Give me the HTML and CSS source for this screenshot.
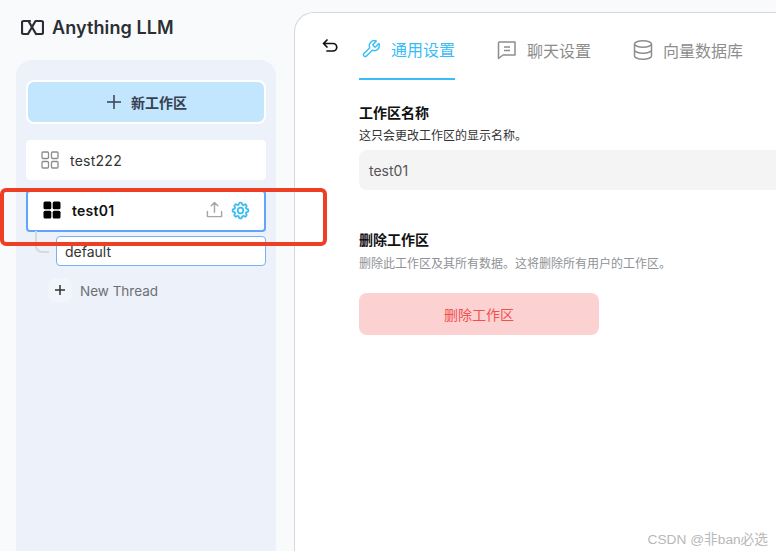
FILE: index.html
```html
<!DOCTYPE html>
<html lang="zh-CN">
<head>
<meta charset="utf-8">
<title>AnythingLLM</title>
<link rel="stylesheet" href="styles.css">
</head>
<body>
<div class="page">
  <aside class="side">
    <div class="brand">
      <svg class="brand-mark" viewBox="0 0 23 17" fill="none" stroke="#2b2f33" stroke-width="2.200" stroke-linejoin="round" stroke-linecap="round"><path d="M9 2H2.500A1.500 1.500 0 0 0 1 3.500V13.500A1.500 1.500 0 0 0 2.500 15H7L14.500 2H20.500A1.500 1.500 0 0 1 22 3.500V13.500A1.500 1.500 0 0 1 20.500 15H16"/><path d="M8 3L15 15"/></svg>
      <span class="brand-name">Anything LLM</span>
    </div>
    <nav class="panel">
      <button class="new-btn">
        <svg class="new-plus" viewBox="0 0 14 14" fill="none" stroke="#374151" stroke-width="1.500"><path d="M7 0V14M0 7H14"/></svg>
        <span>新工作区</span>
      </button>
      <div class="ws">
        <svg class="ws-icon" viewBox="0 0 18 18" fill="none" stroke="#8a8d91" stroke-width="1.300"><rect x="1" y="1" width="6.500" height="6.500" rx="1"/><rect x="10.500" y="1" width="6.500" height="6.500" rx="1"/><rect x="1" y="10.500" width="6.500" height="6.500" rx="1"/><rect x="10.500" y="10.500" width="6.500" height="6.500" rx="1"/></svg>
        <span>test222</span>
      </div>
      <div class="ws ws-active">
        <svg class="ws-icon" viewBox="0 0 18 18" fill="#000"><rect x="0.500" y="0.500" width="7.800" height="7.800" rx="1.500"/><rect x="9.700" y="0.500" width="7.800" height="7.800" rx="1.500"/><rect x="0.500" y="9.700" width="7.800" height="7.800" rx="1.500"/><rect x="9.700" y="9.700" width="7.800" height="7.800" rx="1.500"/></svg>
        <span class="ws-name">test01</span>
        <svg class="act-up" viewBox="0 0 18 18" fill="none" stroke="#a3a6aa" stroke-width="1.500" stroke-linecap="round" stroke-linejoin="round"><path d="M9 12V1.500M5.500 5L9 1.500L12.500 5M1.500 11V16.500H16.500V11"/></svg>
        <svg class="act-gear" viewBox="0 0 24 24" fill="none" stroke="#38bdf8" stroke-width="2"><path d="M10.343 3.940c.09-.542.56-.94 1.110-.94h1.093c.55 0 1.020.398 1.110.94l.149.894c.07.424.384.764.78.93.398.164.855.142 1.205-.108l.737-.527a1.125 1.125 0 011.450.12l.773.774c.39.389.44 1.002.12 1.450l-.527.737c-.25.35-.272.806-.107 1.204.165.397.505.71.93.78l.893.15c.543.09.94.56.94 1.109v1.094c0 .55-.397 1.020-.94 1.110l-.893.149c-.425.07-.765.383-.93.78-.165.398-.143.854.107 1.204l.527.738c.32.447.269 1.060-.12 1.450l-.774.773a1.125 1.125 0 01-1.449.12l-.738-.527c-.35-.25-.806-.272-1.203-.107-.397.165-.71.505-.781.929l-.149.894c-.09.542-.56.94-1.110.94h-1.094c-.55 0-1.019-.398-1.110-.94l-.148-.894c-.071-.424-.384-.764-.781-.93-.398-.164-.854-.142-1.204.108l-.738.527c-.447.32-1.060.269-1.450-.12l-.773-.774a1.125 1.125 0 01-.12-1.450l.527-.737c.25-.35.273-.806.108-1.204-.165-.397-.505-.71-.93-.78l-.894-.15c-.542-.09-.94-.56-.94-1.109v-1.094c0-.55.398-1.020.94-1.110l.894-.149c.424-.07.765-.383.93-.78.165-.398.143-.854-.107-1.204l-.527-.738a1.125 1.125 0 01.12-1.450l.773-.773a1.125 1.125 0 011.450-.12l.737.527c.35.25.807.272 1.204.107.397-.165.71-.505.78-.929l.15-.894z"/><circle cx="12" cy="12" r="3.200"/></svg>
      </div>
      <div class="thread">default</div>
      <div class="new-thread">
        <span class="nt-box"><svg class="nt-plus" viewBox="0 0 10 10" fill="none" stroke="#333" stroke-width="1.500"><path d="M5 0V10M0 5H10"/></svg></span>
        <span class="nt-label">New Thread</span>
      </div>
    </nav>
  </aside>
  <main class="main">
    <svg class="back" viewBox="0 0 16 14" fill="none" stroke="#111" stroke-width="1.700" stroke-linecap="round" stroke-linejoin="round"><path d="M5 1L1.500 4.500L5 8M2 4.500H11A3.700 3.700 0 0 1 11 12H5"/></svg>
    <div class="content">
      <div class="tabs">
        <div class="tab tab-on">
          <svg class="tab-icon" viewBox="0 0 24 24" fill="none" stroke="#38bdf8" stroke-width="1.700" stroke-linecap="round" stroke-linejoin="round"><path d="M14.700 6.300a1 1 0 0 0 0 1.400l1.600 1.600a1 1 0 0 0 1.400 0l3.770-3.770a6 6 0 0 1-7.940 7.940l-6.910 6.910a2.120 2.120 0 0 1-3-3l6.910-6.910a6 6 0 0 1 7.940-7.940l-3.760 3.760z"/></svg>
          <span>通用设置</span>
        </div>
        <div class="tab tab-chat">
          <svg class="tab-icon" viewBox="0 0 20 20" fill="none" stroke="#8d8d8d" stroke-width="1.500" stroke-linejoin="round"><path d="M2.500 2H18V15H6L1.500 18.500V3A1 1 0 0 1 2.500 2Z"/><path d="M7 7H13M7 10.500H13"/></svg>
          <span>聊天设置</span>
        </div>
        <div class="tab tab-db">
          <svg class="tab-icon" viewBox="0 0 20 20" fill="none" stroke="#8d8d8d" stroke-width="1.500"><ellipse cx="10" cy="4" rx="8.500" ry="3.200"/><path d="M1.500 4V16C1.500 17.800 5.300 19.200 10 19.200S18.500 17.800 18.500 16V4M1.500 10C1.500 11.800 5.300 13.200 10 13.200S18.500 11.800 18.500 10"/></svg>
          <span>向量数据库</span>
        </div>
      </div>
      <section class="field">
        <h2 class="label">工作区名称</h2>
        <p class="hint hint-dark">这只会更改工作区的显示名称。</p>
        <div class="input">test01</div>
      </section>
      <section class="field field-del">
        <h2 class="label">删除工作区</h2>
        <p class="hint">删除此工作区及其所有数据。这将删除所有用户的工作区。</p>
        <button class="del-btn">删除工作区</button>
      </section>
    </div>
  </main>
</div>
<div class="callout"></div>
<div class="mark">CSDN @非ban必选</div>
</body>
</html>
```
FILE: styles.css
```css
* { box-sizing: border-box; }
html, body { margin: 0; height: 100%; overflow: hidden; }
body {
  background: #f9fafc;
  font-family: Inter, "Noto Sans CJK SC", sans-serif;
  color: #111;
  position: relative;
}
h2, p { margin: 0; }
button { font: inherit; }

.page { display: flex; height: 551px; width: 776px; }

.side { width: 294px; flex: none; padding-left: 16px; display: flex; flex-direction: column; }
.brand { height: 60px; display: flex; align-items: center; gap: 8px; padding: 0 0 6px 5px; }
.brand-mark { width: 23px; height: 17px; flex: none; }
.brand-name { font-size: 18px; font-weight: 600; color: #2b2f33; letter-spacing: 0.1px; }

.panel {
  width: 260px; flex: 1;
  background: #edf1f9;
  border-radius: 16px 16px 0 0;
  padding: 20px 10px 0;
}
.new-btn {
  width: 240px; height: 44px;
  background: #c1e6fe;
  border: 2px solid #fff;
  border-radius: 8px;
  display: flex; align-items: center; justify-content: center; gap: 10px;
  font-size: 14px; font-weight: 600; color: #374151;
  padding: 0 0 0 2px;
  margin-bottom: 16px;
}
.new-plus { width: 14px; height: 14px; }
.ws {
  width: 240px; height: 40px;
  background: #fff;
  border-radius: 4px;
  display: flex; align-items: center;
  padding-left: 15px;
  font-size: 14px; color: #333;
  letter-spacing: 0.25px;
  gap: 11px;
}
.ws-icon { width: 18px; height: 18px; flex: none; }
.ws-active {
  height: 42px;
  margin-top: 10px;
  border: 2px solid #60a5fa;
  font-weight: 600; color: #111;
  padding: 0 0 2px 15px;
  gap: 11px;
}
.ws-name { flex: 1; }
.act-up { width: 17px; height: 17px; flex: none; margin: -1px -4px 0 0; }
.act-gear { width: 21px; height: 21px; flex: none; margin: 0 13px 0 0; }

.thread {
  position: relative;
  width: 210px; height: 30px;
  margin: 4px 0 0 30px;
  background: #fff;
  border: 1px solid #7aaef5;
  border-radius: 4px;
  padding-left: 8px;
  font-size: 14px; line-height: 29px; color: #333;
}
.thread::before {
  content: "";
  position: absolute;
  left: -22px; top: -6px;
  width: 12px; height: 20px;
  border-left: 2px solid #d8d9db;
  border-bottom: 2px solid #d8d9db;
  border-bottom-left-radius: 7px;
}
.new-thread {
  display: flex; align-items: center; gap: 8px;
  margin: 12px 0 0 22px;
  font-size: 13.500px; color: #6b7075;
}
.nt-label { padding-top: 2px; }
.nt-box {
  width: 24px; height: 24px;
  border-radius: 7px;
  background: #f2f5fb;
  display: flex; align-items: center; justify-content: center;
}
.nt-plus { width: 10px; height: 10px; }

.main {
  flex: 1; min-width: 0;
  margin-top: 12px;
  background: #fff;
  border: 1px solid #d6d8db;
  border-right: 0; border-bottom: 0;
  border-top-left-radius: 20px;
  display: flex;
  overflow: hidden;
}
.back { width: 16px; height: 14px; flex: none; margin: 26px -1px 0 27px; }
.content { flex: 1; min-width: 0; padding-left: 22px; width: 0; }
.tabs { display: flex; height: 67px; }
.tab {
  display: flex; align-items: center; gap: 10px;
  height: 67px; padding-top: 7px;
  font-size: 16px; color: #8d8d8d;
  white-space: nowrap;
}
.tab-icon { width: 20px; height: 20px; flex: none; }
.tab-on {
  width: 96px; padding-left: 2px;
  color: #38bdf8;
  border-bottom: 2px solid #38bdf8;
}
.tab-chat { margin-left: 42px; }
.tab-db { margin-left: 42px; }

.field { width: 500px; }
.field:first-of-type { padding-top: 23px; }
.label { font-size: 14px; font-weight: 600; line-height: 20px; color: #111; }
.hint { font-size: 12px; line-height: 16px; margin-top: 6px; color: #8f9296; white-space: nowrap; }
.hint-dark { color: #333; margin-top: 5px; }
.input {
  margin-top: 6px;
  height: 40px;
  background: #f4f4f5;
  border-radius: 8px;
  padding-left: 10px;
  font-size: 14px; line-height: 42px; color: #555;
  width: 500px;
}
.field-del { padding-top: 40px; }
.del-btn {
  display: block;
  margin-top: 21px;
  width: 240px; height: 42px;
  border: 0; border-radius: 8px;
  background: #fbd1d1;
  color: #f25050;
  font-size: 14px;
}

.callout {
  position: absolute;
  left: 0; top: 188px;
  width: 327px; height: 58px;
  border: 4px solid #ee3f24;
  border-radius: 6px;
}
.mark {
  position: absolute;
  right: 8px; top: 528px;
  font-size: 13.700px; color: #b8b8b8;
  font-family: "Liberation Sans", "Noto Sans CJK SC", sans-serif;
}
```
